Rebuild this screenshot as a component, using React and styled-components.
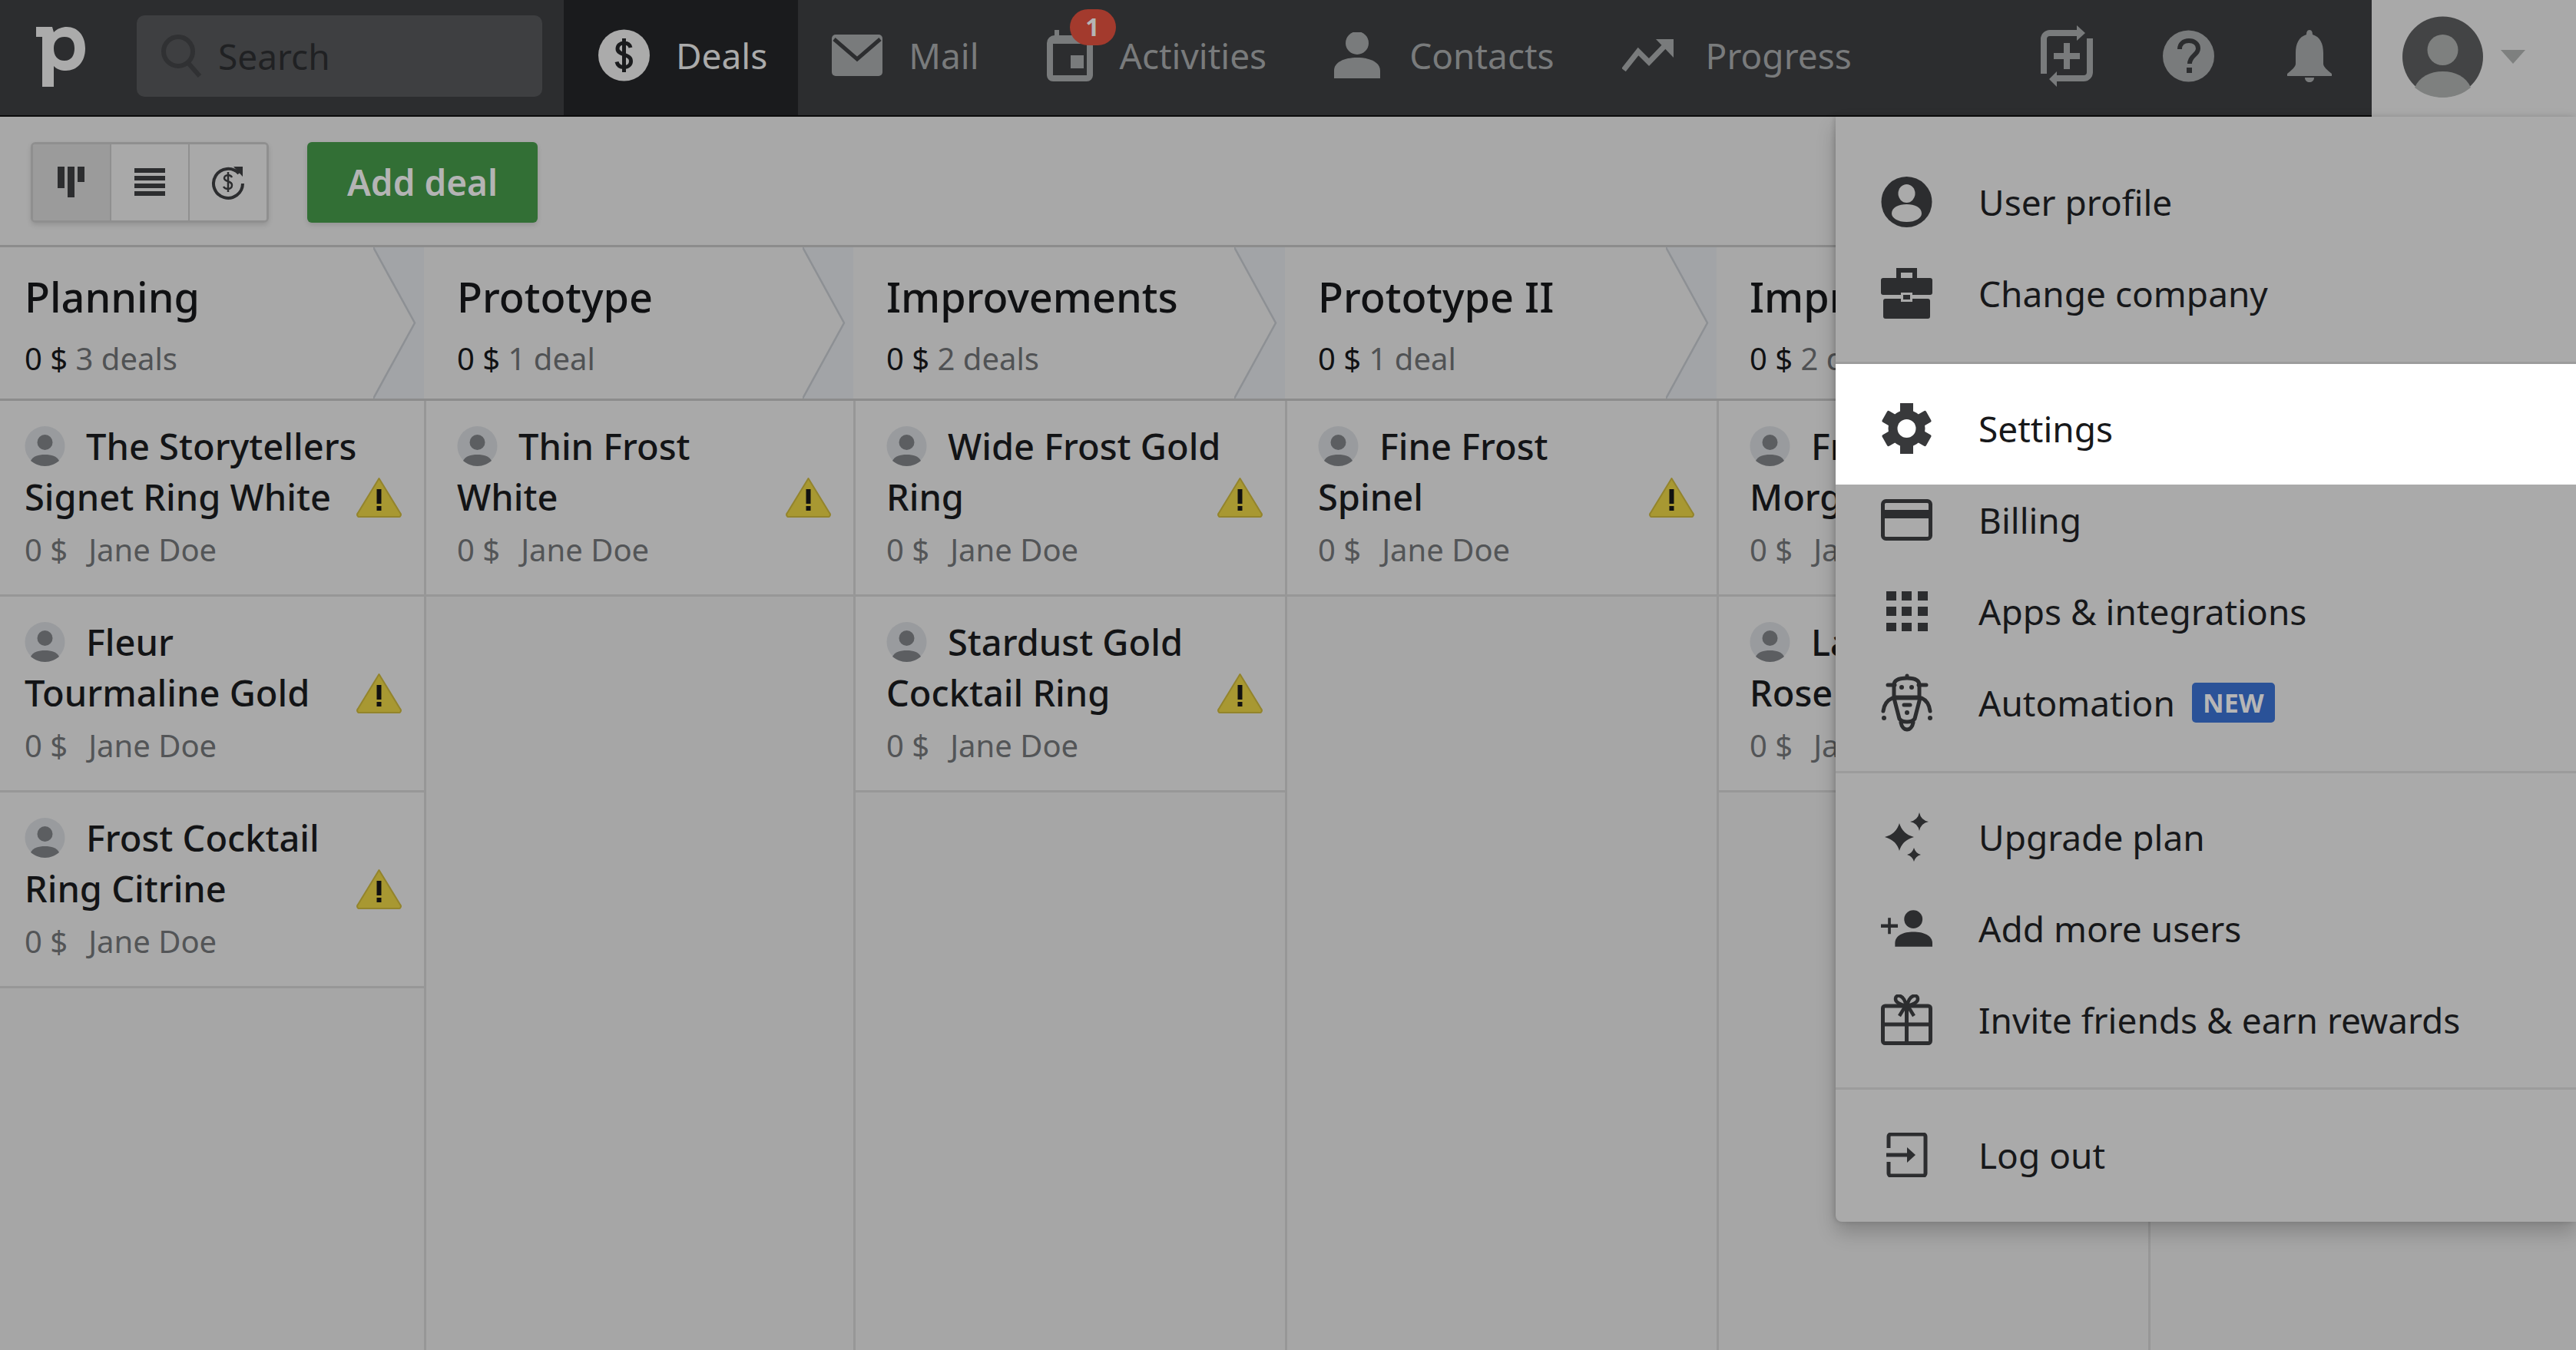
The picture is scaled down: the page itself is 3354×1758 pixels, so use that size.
import React from "react";
import styled, { createGlobalStyle } from "styled-components";

const FONT = `"Noto Sans", "Open Sans", sans-serif`;

const GlobalStyle = createGlobalStyle`
  html, body { margin: 0; padding: 0; background: #a5a5a5; }
  body { font-family: ${FONT}; }
`;

const Page = styled.div`
  position: relative;
  width: 3354px;
  height: 1758px;
  overflow: hidden;
  background: #a6a6a6;
  display: flex;
  flex-direction: column;
`;

const TopBar = styled.header`
  height: 150px;
  flex: none;
  display: flex;
  background: #2c2d2f;
  border-bottom: 2px solid #0c0c0c;
`;

const Logo = styled.div`
  width: 178px;
  flex: none;
  display: flex;
  padding: 35px 0 0 47px;
  box-sizing: border-box;
`;

const SearchBox = styled.div`
  width: 528px;
  height: 106px;
  margin-top: 20px;
  flex: none;
  display: flex;
  align-items: center;
  gap: 20px;
  padding-left: 30px;
  box-sizing: border-box;
  border-radius: 10px;
  background: #3e3f41;
  color: #202123;
  font-size: 46px;
`;

const Nav = styled.nav`
  display: flex;
  margin-left: 28px;
`;

const NavItem = styled.div`
  height: 150px;
  box-sizing: border-box;
  display: flex;
  align-items: center;
  gap: ${(p) => p.$gap || 34}px;
  padding: 0 ${(p) => (p.$active ? 40 : 44)}px 6px ${(p) => (p.$active ? 45 : 44)}px;
  background: ${(p) => (p.$active ? "#1a1b1d" : "transparent")};
  color: ${(p) => (p.$active ? "#ababab" : "#797b7c")};
  font-size: 46px;
  white-space: nowrap;
`;

const NavIcon = styled.span`
  position: relative;
  display: flex;
`;

const Badge = styled.span`
  position: absolute;
  left: 30px;
  top: -27px;
  width: 60px;
  height: 47px;
  border-radius: 24px;
  background: #a33a2d;
  color: #b5b5b5;
  font-size: 32px;
  font-weight: 700;
  line-height: 46px;
  text-align: center;
`;

const TopTools = styled.div`
  margin-left: auto;
  display: flex;
  align-items: center;
  gap: 95px;
  padding: 0 52px 4px 0;
`;

const QuickAddSlot = styled.span`
  display: flex;
  margin-right: -4px;
`;

const AccountArea = styled.div`
  width: 266px;
  flex: none;
  display: flex;
  align-items: center;
  gap: 23px;
  padding: 0 0 4px 40px;
  box-sizing: border-box;
  background: #a9a9a9;
  margin-bottom: -2px;
`;

const Caret = styled.span`
  width: 0;
  height: 0;
  border-left: 16px solid transparent;
  border-right: 16px solid transparent;
  border-top: 18px solid #7e807f;
`;

const Toolbar = styled.div`
  height: 167px;
  flex: none;
  display: flex;
  align-items: center;
  gap: 50px;
  padding: 3px 0 0 40px;
  background: #a8a8a8;
  box-sizing: border-box;
`;

const ViewGroup = styled.div`
  display: flex;
  height: 105px;
  border: 3px solid #8f8f8f;
  border-radius: 6px;
  box-sizing: border-box;
  box-shadow: 0 3px 6px rgba(0, 0, 0, 0.12);
  overflow: hidden;
`;

const ViewButton = styled.div`
  width: 100px;
  display: flex;
  align-items: center;
  justify-content: center;
  background: ${(p) => (p.$active ? "#9b9b9b" : "#a9a9a9")};
  & + & {
    border-left: 2px solid #909090;
  }
`;

const AddDeal = styled.div`
  width: 300px;
  height: 105px;
  display: flex;
  align-items: center;
  justify-content: center;
  border-radius: 6px;
  background: #326f35;
  color: #b4b4b4;
  font-size: 46px;
  font-weight: 600;
  box-shadow: 0 3px 6px rgba(0, 0, 0, 0.12);
`;

const Board = styled.div`
  flex: 1;
  display: flex;
  margin-left: -8px;
  min-height: 0;
`;

const Column = styled.section`
  width: ${(p) => p.$width}px;
  flex: none;
  box-sizing: border-box;
  display: flex;
  flex-direction: column;
  border-right: 3px solid #979797;
`;

const ColumnHeader = styled.div`
  position: relative;
  height: 203px;
  flex: none;
  box-sizing: border-box;
  padding: 31px 0 0 40px;
  background: #a8a8a8;
  border-top: 3px solid #8c8c8c;
  border-bottom: 3px solid #8c8c8c;
  margin-right: -3px;
`;

const ColumnTitle = styled.div`
  font-size: 54px;
  font-weight: 500;
  line-height: 66px;
  color: #101113;
`;

const ColumnMeta = styled.div`
  margin-top: 20px;
  font-size: 40px;
  line-height: 56px;
  color: #505254;
  b {
    font-weight: 400;
    color: #101113;
  }
`;

const Arrow = styled.svg`
  position: absolute;
  right: 3px;
  top: 0;
  width: 66px;
  height: 197px;
`;

const DealCard = styled.article`
  height: 255px;
  box-sizing: border-box;
  padding: 26px 29px 0 40px;
  background: #a9a9a9;
  border-bottom: 3px solid #979797;
`;

const TitleLine = styled.div`
  height: 66px;
  display: flex;
  align-items: center;
  justify-content: ${(p) => (p.$spread ? "space-between" : "flex-start")};
  gap: 27px;
  font-size: 47px;
  font-weight: 500;
  color: #131416;
  white-space: nowrap;
`;

const DealMeta = styled.div`
  margin-top: 8px;
  display: flex;
  gap: 27px;
  font-size: 40px;
  line-height: 56px;
  color: #535557;
  white-space: nowrap;
`;

const Menu = styled.aside`
  position: absolute;
  left: 2390px;
  right: 0;
  top: 152px;
  height: 1439px;
  background: #aaaaaa;
  border-bottom-left-radius: 8px;
  box-shadow: 0 14px 26px rgba(0, 0, 0, 0.2), -2px 0 6px rgba(0, 0, 0, 0.14);
`;

const MenuSection = styled.div`
  padding: ${(p) => p.$top}px 0 ${(p) => p.$bottom}px;
  & + & {
    border-top: 3px solid #9c9c9c;
  }
`;

const MenuRow = styled.div`
  display: flex;
  align-items: center;
  gap: 60px;
  height: ${(p) => (p.$highlight ? 157 : 119)}px;
  box-sizing: border-box;
  padding: ${(p) => (p.$highlight ? "10px" : "0")} 0 0 59px;
  margin-top: ${(p) => p.$pull || 0}px;
  background: ${(p) => (p.$highlight ? "#ffffff" : "transparent")};
  color: #17181a;
  font-size: 46px;
`;

const MenuIcon = styled.span`
  width: 67px;
  height: 67px;
  flex: none;
  display: flex;
  align-items: center;
  justify-content: center;
`;

const NewTag = styled.span`
  margin-left: -38px;
  width: 108px;
  height: 52px;
  display: flex;
  align-items: center;
  justify-content: center;
  border-radius: 5px;
  background: #2a5298;
  color: #b6b6b6;
  font-size: 34px;
  font-weight: 700;
`;

const DARK = "#2c2d2f";
const NAV = "#797b7c";

const PipeLogo = () => (
  <svg width="64" height="78" viewBox="0 0 64 78">
    <path
      fill="#ababab"
      fillRule="evenodd"
      d="M0 0h21l2 7C28 2 34 0 40 0c14 0 24 11 24 28 0 18-11 29-25 29-7 0-12-2-16-6v27H8V13H0zM23 28c0 10 5 16 14 16s13-7 13-16-4-15-13-15-14 6-14 15z"
    />
  </svg>
);

const SearchIcon = () => (
  <svg width="56" height="56" viewBox="0 0 56 56" fill="none" stroke="#303133" strokeWidth="6">
    <circle cx="24" cy="22" r="19" />
    <path d="M37 37l15 17" />
  </svg>
);

const DealsIcon = () => (
  <svg width="67" height="68" viewBox="0 0 67 68">
    <circle cx="33.5" cy="34" r="33.5" fill="#ababab" />
    <path
      d="M42 24c-1-4-4-6-8.500-6-5 0-8.500 3-8.500 7.500 0 9 17.500 6 17.500 16 0 4.500-3.500 8-9 8-5 0-8.500-2.500-9.500-7M33.500 12v44"
      fill="none"
      stroke="#1a1b1d"
      strokeWidth="5"
    />
  </svg>
);

const MailIcon = () => (
  <svg width="66" height="54" viewBox="0 0 66 54">
    <rect width="66" height="54" rx="5" fill={NAV} />
    <path d="M3 6l30 26L63 6" fill="none" stroke="#2c2d2f" strokeWidth="5" />
  </svg>
);

const CalendarIcon = () => (
  <svg width="60" height="67" viewBox="0 0 60 67">
    <path
      fill={NAV}
      fillRule="evenodd"
      d="M10 0h6v7h34a10 10 0 0 1 10 10v42a8 8 0 0 1-8 8H8a8 8 0 0 1-8-8V17A10 10 0 0 1 10 7zM8 18v41h44V18z"
    />
    <rect x="31" y="33" width="17" height="17" fill={NAV} />
  </svg>
);

const ContactsIcon = () => (
  <svg width="60" height="60" viewBox="0 0 60 60">
    <ellipse cx="30" cy="14" rx="15" ry="15" fill={NAV} />
    <path d="M0 60V50c0-11 13-17 30-17s30 6 30 17v10z" fill={NAV} />
  </svg>
);

const ProgressIcon = () => (
  <svg width="67" height="42" viewBox="0 0 67 42">
    <path d="M2 40l19-24 14 14L60 4" fill="none" stroke={NAV} strokeWidth="7" />
    <path d="M44 0h23v24z" fill={NAV} />
  </svg>
);

const QuickAddIcon = () => (
  <svg width="68" height="80" viewBox="17 13 68 80">
    <g fill="none" stroke={NAV} strokeWidth="8">
      <path d="M21 76V31a8 8 0 0 1 8-8h38" />
      <path d="M81 30v44a8 8 0 0 1-8 8H38" />
      <path d="M51 36v34M34 53h34" />
    </g>
    <path d="M64 13l11 10-11 10zM38 73l-10 10 10 10z" fill={NAV} />
  </svg>
);

const HelpIcon = () => (
  <svg width="67" height="68" viewBox="0 0 67 68">
    <circle cx="33.500" cy="34" r="33.500" fill={NAV} />
    <path d="M22 25c0-7 5-11 12-11s12 4 12 10c0 9-11 9-11 20" fill="none" stroke="#2c2d2f" strokeWidth="6" />
    <rect x="31" y="49" width="7" height="7" fill="#2c2d2f" />
  </svg>
);

const BellIcon = () => (
  <svg width="58" height="68" viewBox="0 0 58 68">
    <path
      fill={NAV}
      d="M29 0c3 0 4 3 4 6 10 3 14 12 14 24v14c0 4 5 8 11 13v3H0v-3c6-5 11-9 11-13V30C11 18 15 9 25 6c0-3 1-6 4-6zM23 62h12c0 4-3 6-6 6s-6-2-6-6z"
    />
  </svg>
);

const AccountAvatar = () => (
  <svg width="105" height="106" viewBox="0 0 105 106">
    <circle cx="52.500" cy="53" r="52.500" fill="#434445" />
    <ellipse cx="52.500" cy="44" rx="20" ry="20" fill="#7e807f" />
    <path d="M16 93c6-14 20-21 36.500-21S83 79 89 93c-10 8-22 13-36.500 13S26 101 16 93z" fill="#7e807f" />
  </svg>
);

const BoardViewIcon = () => (
  <svg width="36" height="40" viewBox="0 0 36 40" fill={DARK}>
    <rect width="9" height="28" />
    <rect x="13" width="9" height="40" />
    <rect x="26" width="9" height="20" />
  </svg>
);

const ListViewIcon = () => (
  <svg width="40" height="36" viewBox="0 0 40 36" fill={DARK}>
    <rect width="40" height="6" />
    <rect y="10" width="40" height="6" />
    <rect y="20" width="40" height="6" />
    <rect y="30" width="40" height="6" />
  </svg>
);

const ForecastIcon = () => (
  <svg width="46" height="46" viewBox="0 0 46 46">
    <path d="M37 12A19 19 0 1 0 42 25" fill="none" stroke={DARK} strokeWidth="4" />
    <path d="M30 3h12v13z" fill={DARK} />
    <path d="M28 17c-1-2-3-3-5-3-3 0-5 2-5 4 0 5 10 3 10 9 0 3-2 5-5 5-2 0-5-1-6-3M23 10v26" fill="none" stroke={DARK} strokeWidth="2.500" />
  </svg>
);

const PersonAvatar = () => (
  <svg width="53" height="52" viewBox="0 0 53 52" style={{ flex: "none" }}>
    <circle cx="26.500" cy="26" r="26" fill="#999b9e" />
    <circle cx="26.500" cy="21" r="10" fill="#5c5e61" />
    <path d="M8 45c3-6 10-8 18.500-8S42 39 45 45c-5 4-11 7-18.500 7S13 49 8 45z" fill="#5c5e61" />
  </svg>
);

const WarningIcon = () => (
  <svg width="59" height="53" viewBox="0 0 59 53" style={{ flex: "none" }}>
    <path
      d="M29.500 2L57 47a3 3 0 0 1-3 5H5a3 3 0 0 1-3-5z"
      fill="#a89832"
      stroke="#93842c"
      strokeWidth="2"
      strokeLinejoin="round"
    />
    <rect x="26.500" y="16" width="6" height="19" fill="#111" />
    <rect x="26.500" y="38" width="6" height="6" fill="#111" />
  </svg>
);

const ProfileIcon = () => (
  <svg width="67" height="66" viewBox="0 0 67 66">
    <circle cx="33.500" cy="33" r="33" fill={DARK} />
    <ellipse cx="33.500" cy="22" rx="11" ry="12" fill="#aaa" />
    <path d="M14 48c0-8 9-12 19.500-12S53 40 53 48c0 6-8 11-19.500 11S14 54 14 48z" fill="#aaa" />
  </svg>
);

const CompanyIcon = () => (
  <svg width="67" height="66" viewBox="0 0 67 66" fill={DARK}>
    <path fillRule="evenodd" d="M20 0h27v15H41V6H26v9h-6z" />
    <rect y="13" width="67" height="22" rx="3" />
    <rect x="3" y="40" width="61" height="26" rx="3" />
    <rect x="26" y="32" width="15" height="12" fill="#aaa" />
    <rect x="29" y="35" width="9" height="6" fill={DARK} />
  </svg>
);

const SettingsIcon = () => (
  <svg width="67" height="66" viewBox="0 0 67 66">
    <g fill="#38393b">
      <circle cx="33.500" cy="33" r="24" />
      <rect x="25" y="0" width="17" height="66" />
      <rect x="25" y="0" width="17" height="66" rx="2" transform="rotate(60 33.500 33)" />
      <rect x="25" y="0" width="17" height="66" rx="2" transform="rotate(120 33.500 33)" />
    </g>
    <circle cx="33.500" cy="33" r="12" fill="#fff" />
  </svg>
);

const BillingIcon = () => (
  <svg width="67" height="54" viewBox="0 0 67 54">
    <rect x="2.500" y="2.500" width="62" height="49" rx="4" fill="none" stroke={DARK} strokeWidth="5" />
    <rect x="3" y="14" width="61" height="11" fill={DARK} />
  </svg>
);

const AppsIcon = () => (
  <svg width="54" height="52" viewBox="0 0 54 52" fill={DARK}>
    {[0, 20, 41].map((y) =>
      [0, 20, 41].map((x) => <rect key={`${x}-${y}`} x={x} y={y} width="13" height="12" />)
    )}
  </svg>
);

const RobotIcon = () => (
  <svg
    width="72"
    height="78"
    viewBox="17 17 72 78"
    fill="none"
    stroke={DARK}
    strokeWidth="5"
    strokeLinecap="round"
    strokeLinejoin="round"
    style={{ flex: "none" }}
  >
    <path d="M28 33h9M68 33h10" />
    <path d="M36 49V33c0-6 6-9 17-9s16 3 16 9v16z" />
    <path d="M53 21v1" />
    <path d="M36 50h34l-7 27c-2 3-5 4-10 4s-8-1-10-4z" />
    <path d="M34 50c-7 3-11 9-12 17M72 50c7 3 10 9 11 17" />
    <path d="M49 59h8" />
    <path d="M45 82c1 5 4 9 8 9s7-4 8-9" />
    <g fill={DARK} stroke="none">
      <circle cx="46" cy="36" r="3" />
      <circle cx="59" cy="36" r="3" />
      <circle cx="53" cy="69" r="3" />
      <circle cx="23" cy="76" r="3" />
      <circle cx="83" cy="76" r="3" />
    </g>
  </svg>
);

const SparkleIcon = () => (
  <svg width="57" height="64" viewBox="0 0 57 64" fill={DARK}>
    <path d="M19 14Q23 28 38 32Q23 36 19 50Q15 36 0 32Q15 28 19 14z" />
    <path d="M45 0Q47 10 57 12Q47 14 45 24Q43 14 33 12Q43 10 45 0z" />
    <path d="M38 46Q40 53 47 55Q40 57 38 64Q36 57 29 55Q36 53 38 46z" />
  </svg>
);

const AddUserIcon = () => (
  <svg width="73" height="52" viewBox="0 0 73 52" fill={DARK}>
    <ellipse cx="46" cy="13" rx="13" ry="13" />
    <path d="M20 52V47c0-11 12-16 26-16s27 5 27 16v5z" />
    <path d="M0 20h10v-9h4v9h10v5H14v9h-4v-9H0z" />
  </svg>
);

const GiftIcon = () => (
  <svg width="67" height="66" viewBox="0 0 67 66" fill="none" stroke={DARK} strokeWidth="5">
    <rect x="2.500" y="15" width="62" height="48.500" rx="3" />
    <path d="M2 39h63M33.500 15v49" />
    <path d="M33 15c-8-2-14-5-14-9s3-5 6-4c4 1 7 7 8 13zm1 0c8-2 14-5 14-9s-3-5-6-4c-4 1-7 7-8 13zM32 15l-8 13M35 15l8 13" strokeWidth="4.500" />
  </svg>
);

const LogoutIcon = () => (
  <svg width="54" height="58" viewBox="0 0 54 58" fill="none" stroke={DARK} strokeWidth="5">
    <path d="M3 20V5a3 3 0 0 1 3-3h42a3 3 0 0 1 3 3v48a3 3 0 0 1-3 3H6a3 3 0 0 1-3-3V38" />
    <path d="M0 29h27" />
    <path d="M27 19l11 10-11 10z" fill={DARK} stroke="none" />
  </svg>
);

const COLUMNS = [
  {
    title: "Planning",
    count: "3 deals",
    width: 563,
    deals: [
      ["The Storytellers", "Signet Ring White"],
      ["Fleur", "Tourmaline Gold"],
      ["Frost Cocktail", "Ring Citrine"],
    ],
  },
  { title: "Prototype", count: "1 deal", width: 559, deals: [["Thin Frost", "White"]] },
  {
    title: "Improvements",
    count: "2 deals",
    width: 562,
    deals: [
      ["Wide Frost Gold", "Ring"],
      ["Stardust Gold", "Cocktail Ring"],
    ],
  },
  { title: "Prototype II", count: "1 deal", width: 562, deals: [["Fine Frost", "Spinel"]] },
  {
    title: "Improvements",
    count: "2 deals",
    width: 562,
    deals: [
      ["Frost Gold", "Morganite"],
      ["Lady Gold", "Rose Ring"],
    ],
  },
];

const MENU = [
  {
    top: 51,
    bottom: 30,
    rows: [
      { icon: <ProfileIcon />, label: "User profile" },
      { icon: <CompanyIcon />, label: "Change company" },
    ],
  },
  {
    top: 0,
    bottom: 30,
    rows: [
      { icon: <SettingsIcon />, label: "Settings", highlight: true },
      { icon: <BillingIcon />, label: "Billing", pull: -14 },
      { icon: <AppsIcon />, label: "Apps & integrations" },
      { icon: <RobotIcon />, label: "Automation", tag: "NEW" },
    ],
  },
  {
    top: 23,
    bottom: 29,
    rows: [
      { icon: <SparkleIcon />, label: "Upgrade plan" },
      { icon: <AddUserIcon />, label: "Add more users" },
      { icon: <GiftIcon />, label: "Invite friends & earn rewards" },
    ],
  },
  {
    top: 25,
    bottom: 27,
    rows: [{ icon: <LogoutIcon />, label: "Log out" }],
  },
];

const App = () => {
  return (
    <Page>
      <GlobalStyle />
      <TopBar>
        <Logo>
          <PipeLogo />
        </Logo>
        <SearchBox>
          <SearchIcon />
          Search
        </SearchBox>
        <Nav>
          <NavItem $active>
            <DealsIcon />
            Deals
          </NavItem>
          <NavItem>
            <MailIcon />
            Mail
          </NavItem>
          <NavItem $gap={35}>
            <NavIcon>
              <CalendarIcon />
              <Badge>1</Badge>
            </NavIcon>
            Activities
          </NavItem>
          <NavItem $gap={38}>
            <ContactsIcon />
            Contacts
          </NavItem>
          <NavItem $gap={42}>
            <ProgressIcon />
            Progress
          </NavItem>
        </Nav>
        <TopTools>
          <QuickAddSlot>
            <QuickAddIcon />
          </QuickAddSlot>
          <HelpIcon />
          <BellIcon />
        </TopTools>
        <AccountArea>
          <AccountAvatar />
          <Caret />
        </AccountArea>
      </TopBar>

      <Toolbar>
        <ViewGroup>
          <ViewButton $active>
            <BoardViewIcon />
          </ViewButton>
          <ViewButton>
            <ListViewIcon />
          </ViewButton>
          <ViewButton>
            <ForecastIcon />
          </ViewButton>
        </ViewGroup>
        <AddDeal>Add deal</AddDeal>
      </Toolbar>

      <Board>
        {COLUMNS.map((col, i) => (
          <Column key={i} $width={col.width}>
            <ColumnHeader>
              <ColumnTitle>{col.title}</ColumnTitle>
              <ColumnMeta>
                <b>0 $</b> {col.count}
              </ColumnMeta>
              <Arrow viewBox="0 0 66 195" preserveAspectRatio="none">
                <path d="M0 0h66v195H0l54-97.500z" fill="#a2a4a7" />
                <path d="M0 0l54 97.500L0 195" fill="none" stroke="#8d9094" strokeWidth="2.500" />
              </Arrow>
            </ColumnHeader>
            {col.deals.map((deal, j) => (
              <DealCard key={j}>
                <TitleLine>
                  <PersonAvatar />
                  {deal[0]}
                </TitleLine>
                <TitleLine $spread>
                  {deal[1]}
                  <WarningIcon />
                </TitleLine>
                <DealMeta>
                  <span>0 $</span>
                  <span>Jane Doe</span>
                </DealMeta>
              </DealCard>
            ))}
          </Column>
        ))}
      </Board>

      <Menu>
        {MENU.map((section, i) => (
          <MenuSection key={i} $top={section.top} $bottom={section.bottom}>
            {section.rows.map((row) => (
              <MenuRow key={row.label} $highlight={row.highlight} $pull={row.pull}>
                <MenuIcon>{row.icon}</MenuIcon>
                {row.label}
                {row.tag && <NewTag>{row.tag}</NewTag>}
              </MenuRow>
            ))}
          </MenuSection>
        ))}
      </Menu>
    </Page>
  );
};

export default App;
